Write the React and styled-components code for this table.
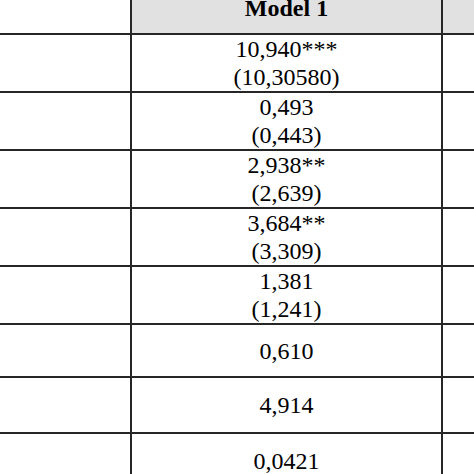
import React from "react";
import styled, { createGlobalStyle } from "styled-components";

const GlobalStyle = createGlobalStyle`
  html, body {
    margin: 0;
    padding: 0;
    background: #ffffff;
  }
`;

const Frame = styled.div`
  width: 474px;
  height: 474px;
  overflow: hidden;
  background: #ffffff;
`;

const Table = styled.table`
  border-collapse: collapse;
  table-layout: fixed;
  width: 760px;
  margin-top: -6px;
  margin-left: -69px;
  font-family: "Liberation Serif", "Times New Roman", serif;
  font-size: 24px;
  line-height: 28px;
  color: #000000;
`;

const HeadCell = styled.th`
  background: ${(props) => (props.blank ? "#ffffff" : "#e1e1e1")};
  font-weight: bold;
  text-align: center;
  padding: 0 0 11px;
  border: 2px solid #262626;
  border-top: none;
  border-left: ${(props) => (props.blank ? "none" : "2px solid #262626")};
`;

const Cell = styled.td`
  height: ${(props) => props.h}px;
  padding: 0;
  text-align: center;
  vertical-align: middle;
  border: 2px solid #262626;
  border-left: ${(props) => (props.first ? "none" : "2px solid #262626")};
`;

const Line = styled.div`
  white-space: nowrap;
`;

const rows = [
  { value: "10,940***", se: "(10,30580)", h: 56 },
  { value: "0,493", se: "(0,443)", h: 56 },
  { value: "2,938**", se: "(2,639)", h: 56 },
  { value: "3,684**", se: "(3,309)", h: 56 },
  { value: "1,381", se: "(1,241)", h: 56 },
  { value: "0,610", h: 51 },
  { value: "4,914", h: 54 },
  { value: "0,0421", h: 54 },
];

export default function App() {
  return (
    <Frame>
      <GlobalStyle />
      <Table>
        <colgroup>
          <col style={{ width: 200 }} />
          <col style={{ width: 311 }} />
          <col style={{ width: 249 }} />
        </colgroup>
        <thead>
          <tr>
            <HeadCell blank />
            <HeadCell>Model 1</HeadCell>
            <HeadCell />
          </tr>
        </thead>
        <tbody>
          {rows.map((row, i) => (
            <tr key={i}>
              <Cell first h={row.h} />
              <Cell h={row.h}>
                <Line>{row.value}</Line>
                {row.se && <Line>{row.se}</Line>}
              </Cell>
              <Cell h={row.h} />
            </tr>
          ))}
        </tbody>
      </Table>
    </Frame>
  );
}
